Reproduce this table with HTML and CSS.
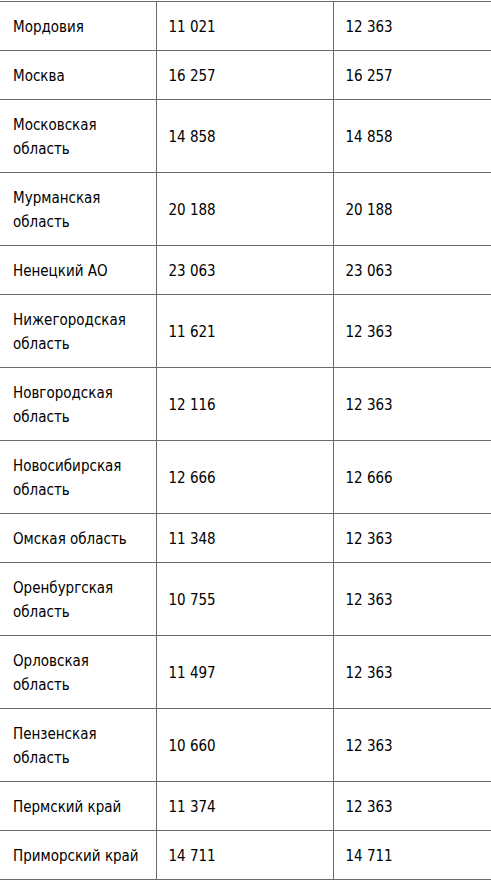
FILE: index.html
```html
<!DOCTYPE html>
<html lang="ru">
<head>
<meta charset="utf-8">
<title>Таблица</title>
<link rel="stylesheet" href="styles.css">
</head>
<body>
<div class="wrap">
<table class="grid">
<colgroup><col class="c1"><col class="c2"><col class="c3"></colgroup>
<tbody>
<tr><td>Мордовия</td><td>11 021</td><td>12 363</td></tr>
<tr><td>Москва</td><td>16 257</td><td>16 257</td></tr>
<tr><td>Московская область</td><td>14 858</td><td>14 858</td></tr>
<tr><td>Мурманская область</td><td>20 188</td><td>20 188</td></tr>
<tr><td>Ненецкий АО</td><td>23 063</td><td>23 063</td></tr>
<tr><td>Нижегородская область</td><td>11 621</td><td>12 363</td></tr>
<tr><td>Новгородская область</td><td>12 116</td><td>12 363</td></tr>
<tr><td>Новосибирская область</td><td>12 666</td><td>12 666</td></tr>
<tr><td>Омская область</td><td>11 348</td><td>12 363</td></tr>
<tr><td>Оренбургская область</td><td>10 755</td><td>12 363</td></tr>
<tr><td>Орловская область</td><td>11 497</td><td>12 363</td></tr>
<tr><td>Пензенская область</td><td>10 660</td><td>12 363</td></tr>
<tr><td>Пермский край</td><td>11 374</td><td>12 363</td></tr>
<tr><td>Приморский край</td><td>14 711</td><td>14 711</td></tr>
</tbody>
</table>
</div>
</body>
</html>
```
FILE: styles.css
```css
html, body {
  margin: 0;
  padding: 0;
  background: #fff;
}
.wrap {
  padding-top: 1px;
  overflow: hidden;
}
.grid {
  border-collapse: collapse;
  table-layout: fixed;
  width: 491px;
  font-family: "DejaVu Sans Condensed", "DejaVu Sans", sans-serif;
  font-size: 15px;
  line-height: 24px;
  color: #000;
}
.c1 { width: 156px; }
.c2 { width: 177px; }
.c3 { width: 158px; }
.grid td {
  border: 1px solid #6b6b6b;
  padding: 13px 12px 11px 12px;
  vertical-align: middle;
  text-align: left;
}
.grid td:first-child {
  border-left: none;
  padding-left: 13px;
}
.grid td:last-child {
  border-right: none;
}
```
